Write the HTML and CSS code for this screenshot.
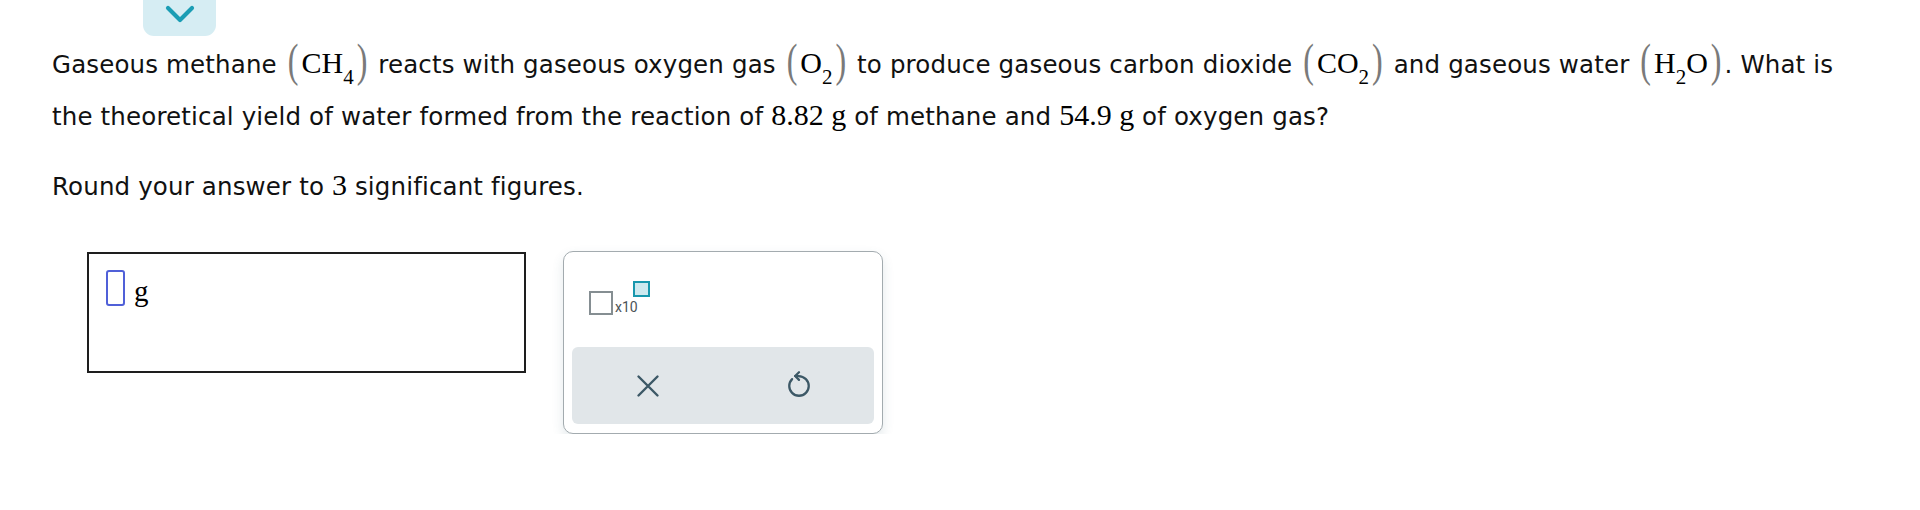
FILE: index.html
```html
<!DOCTYPE html>
<html>
<head>
<meta charset="utf-8">
<link rel="stylesheet" href="styles.css">
</head>
<body>
<div class="page">
  <div class="tab">
    <svg class="chev" width="30" height="20" viewBox="0 0 30 20"><path d="M3 3 L15 15 L27 3" fill="none" stroke="#1a9db4" stroke-width="4.2" stroke-linecap="round" stroke-linejoin="round"/></svg>
  </div>
  <p class="q">Gaseous methane <span class="m"><span class="pr">(</span>CH<sub>4</sub><span class="pr">)</span></span> reacts with gaseous oxygen gas <span class="m"><span class="pr">(</span>O<sub>2</sub><span class="pr">)</span></span> to produce gaseous carbon dioxide <span class="m"><span class="pr">(</span>CO<sub>2</sub><span class="pr">)</span></span> and gaseous water <span class="m"><span class="pr">(</span>H<sub>2</sub>O<span class="pr">)</span></span>. What is the theoretical yield of water formed from the reaction of <span class="m">8.82 g</span> of methane and <span class="m">54.9 g</span> of oxygen gas?</p>
  <p class="round">Round your answer to <span class="m">3</span> significant figures.</p>
  <div class="answer-row">
    <div class="answer-box">
      <span class="cursor"></span>
      <span class="unit">g</span>
    </div>
    <div class="tools">
      <div class="sci">
        <div class="sci-icon">
          <span class="base-box"></span>
          <span class="x10">x10</span>
          <span class="exp-box"></span>
        </div>
      </div>
      <div class="btns">
        <div class="btn">
          <svg width="24" height="24" viewBox="0 0 24 24"><path d="M2.5 2.5 L21.5 21.5 M21.5 2.5 L2.5 21.5" fill="none" stroke="#3c5866" stroke-width="2.4" stroke-linecap="round"/></svg>
        </div>
        <div class="btn">
          <svg class="undo" width="26" height="26" viewBox="0 0 24 24"><path d="M3 12a9 9 0 1 0 9-9 9.75 9.75 0 0 0-6.74 2.74L3 8" fill="none" stroke="#3c5866" stroke-width="2.1" stroke-linecap="round" stroke-linejoin="round"/><path d="M3 3v5h5" fill="none" stroke="#3c5866" stroke-width="2.1" stroke-linecap="round" stroke-linejoin="round"/></svg>
        </div>
      </div>
    </div>
  </div>
</div>
</body>
</html>
```

FILE: styles.css
```css
html, body {
  margin: 0;
  padding: 0;
  background: #ffffff;
}

.page {
  padding-left: 52px;
  font-family: "DejaVu Sans", Verdana, sans-serif;
  font-size: 24.5px;
  letter-spacing: 0.15px;
  color: #111;
}

.tab {
  margin-left: 91px;
  width: 73px;
  height: 36px;
  background: #d6edf3;
  border-radius: 0 0 11px 11px;
  display: flex;
  align-items: center;
  justify-content: center;
}

.chev {
  margin-top: -6px;
}

.q {
  margin: 3px 0 0 0;
  width: 1800px;
  line-height: 52px;
}

.m {
  font-family: "Liberation Serif", "Times New Roman", serif;
  font-size: 30px;
  line-height: 1;
  letter-spacing: 0;
  color: #000;
}

.m sub {
  font-size: 21px;
  vertical-align: -11px;
  line-height: 1;
}

.pr {
  display: inline-block;
  font-size: 32px;
  line-height: 32px;
  color: #7a7a7a;
  transform: scaleY(1.45);
  transform-origin: center 62%;
  margin: 0 3px;
}

.round {
  margin: 26px 0 0 0;
  line-height: 36px;
}

.answer-row {
  display: flex;
  align-items: flex-start;
  gap: 37px;
  margin-left: 35px;
  margin-top: 46px;
  letter-spacing: 0;
}

.answer-box {
  margin-top: 1px;
  width: 439px;
  height: 121px;
  box-sizing: border-box;
  border: 2px solid #1e1e1e;
  padding: 16px 0 0 17px;
  display: flex;
  align-items: flex-start;
}

.cursor {
  width: 19px;
  height: 36px;
  box-sizing: border-box;
  border: 2px solid #5060d8;
  border-radius: 3px;
}

.unit {
  font-family: "Liberation Serif", "Times New Roman", serif;
  font-size: 29px;
  line-height: 29px;
  margin-left: 9px;
  margin-top: 7px;
  color: #000;
}

.tools {
  width: 320px;
  height: 183px;
  box-sizing: border-box;
  border: 1px solid #a3abaf;
  border-radius: 10px;
  box-shadow: 0 5px 12px rgba(60, 100, 110, 0.14);
  padding: 0 8px 9px 8px;
  display: flex;
  flex-direction: column;
  background: #fff;
}

.sci {
  height: 95px;
  padding: 29px 0 0 17px;
  box-sizing: border-box;
}

.sci-icon {
  display: flex;
  align-items: flex-end;
  height: 34px;
}

.base-box {
  width: 24px;
  height: 24px;
  box-sizing: border-box;
  border: 2px solid #858e92;
}

.x10 {
  font-family: Roboto, "Liberation Sans", sans-serif;
  font-size: 14px;
  line-height: 14px;
  color: #4b5357;
  margin-left: 2px;
  margin-bottom: 1px;
}

.exp-box {
  align-self: flex-start;
  width: 17px;
  height: 16px;
  box-sizing: border-box;
  border: 2.5px solid #1897ad;
  background: #cde9ef;
  margin-left: -5px;
}

.btns {
  display: flex;
  height: 77px;
  background: #e1e6e9;
  border-radius: 6px;
}

.btn {
  flex: 1;
  display: flex;
  align-items: center;
  justify-content: center;
}

.undo {
  transform: rotate(45deg);
}
```
